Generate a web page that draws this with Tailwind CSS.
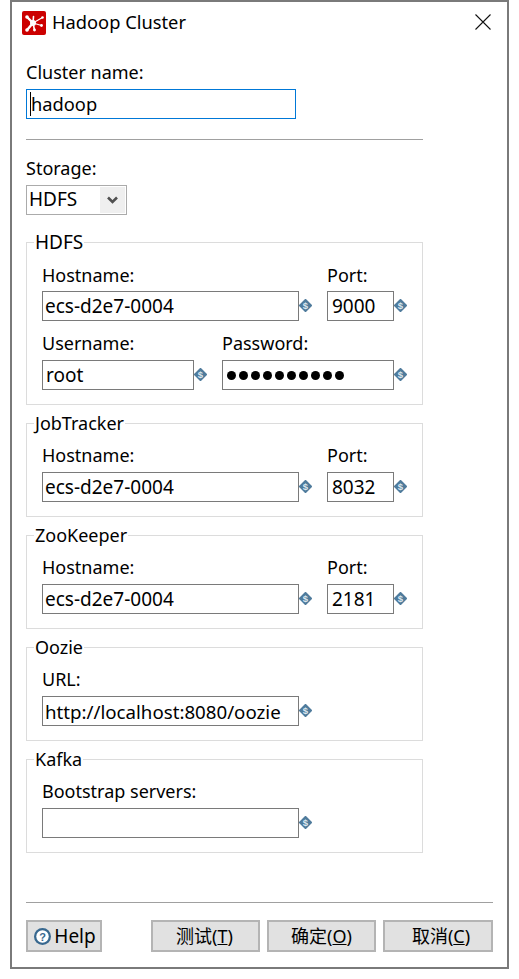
<!DOCTYPE html>
<html lang="en-us">
<head>
	<title>Hadoop Cluster</title>
	<meta name="viewport" content="width=device-width, initial-scale=1">
	<script src="https://cdn.jsdelivr.net/npm/@tailwindcss/browser@4"></script>
</head>
<body class="bg-white">

	<!-- shared variable marker -->
	<svg class="hidden">
		<symbol id="var" viewBox="0 0 13 13">
			<path d="M6.5 1 L12 6.5 L6.5 12 L1 6.5 Z" fill="#4f7b9c" stroke="#4f7b9c" stroke-width="2" stroke-linejoin="round"/>
			<text x="6.5" y="10" text-anchor="middle" font-size="9.5" font-weight="700" fill="#dfe8ef" font-family="Liberation Sans, sans-serif">$</text>
		</symbol>
	</svg>

	<div class="ml-[10px] w-[499px] h-[969px] border-2 border-[#7a7a7a] bg-white text-black text-[18px] leading-[24px] font-['Noto_Sans','Noto_Sans_CJK_SC',sans-serif]">

		<!-- title bar -->
		<div class="h-[42px] flex items-center pl-[10px] pr-[16px]">
			<svg class="w-[24px] h-[24px] shrink-0" viewBox="0 0 24 24">
				<rect width="24" height="24" rx="2" fill="#cc0000"/>
				<g stroke="#fff" stroke-linecap="round">
					<path d="M11 12 L5 6" stroke-width="2.4"/><path d="M11 12 L5 19" stroke-width="2.4"/>
					<path d="M11 12 L11.5 5.5" stroke-width="1.6"/><path d="M11 12 L12.5 19" stroke-width="1.6"/>
					<path d="M11 12 L20.5 6.5" stroke-width="1.2"/><path d="M11 12 L19.5 14.5" stroke-width="1.2"/>
				</g>
				<circle cx="11" cy="12" r="3" fill="#fff"/>
				<circle cx="5" cy="6" r="1.8" fill="#fff"/><circle cx="20.5" cy="6.5" r="1.3" fill="#fff"/>
				<circle cx="5" cy="19" r="1.8" fill="#fff"/><circle cx="19.5" cy="14.5" r="1.4" fill="#fff"/>
				<circle cx="12.5" cy="19" r="1.4" fill="#fff"/>
			</svg>
			<span class="ml-[6px] flex-1 text-[18.3px] -mt-[2px]">Hadoop Cluster</span>
			<svg class="w-[16px] h-[16px] -mt-[2px]" viewBox="0 0 16 16"><path d="M0.5 0.5 L15.5 15.5 M15.5 0.5 L0.5 15.5" stroke="#111" stroke-width="1.1" fill="none"/></svg>
		</div>

		<div class="pl-[14px] pr-[14px]">
			<p class="mt-[16px]">Cluster name:</p>
			<div class="relative mt-[5px] w-[270px]">
				<input value="hadoop" class="w-full h-[30px] border border-[#0078d7] pl-[4px] pb-[2px] text-[18.3px] outline-none">
				<span class="absolute left-[4px] top-[3px] w-px h-[24px] bg-black"></span>
			</div>
			<div class="mt-[20px] w-[397px] h-px bg-[#a0a0a0]"></div>

			<p class="mt-[16px]">Storage:</p>
			<div class="mt-[5px] w-[101px] h-[30px] border border-[#ababab] flex items-center justify-between pl-[2px] pr-px">
				<span class="text-[19px] -mt-[2px]">HDFS</span>
				<span class="w-[25px] h-[26px] bg-[#efefef] flex items-center justify-center">
					<svg class="w-[11px] h-[8px]" viewBox="0 0 11 8"><path d="M1 1.5 L5.5 6 L10 1.5" stroke="#505050" stroke-width="2.6" fill="none"/></svg>
				</span>
			</div>

			<!-- HDFS -->
			<div class="relative mt-[27px] w-[397px] h-[163px] border border-[#dcdcdc] pl-[15px] pt-[20px]">
				<span class="absolute left-[7px] top-[-13px] bg-white px-px text-[19px]">HDFS</span>
				<div class="flex">
					<div class="w-[285px]">
						<p class="mb-[4px]">Hostname:</p>
						<div class="flex items-center">
							<input value="ecs-d2e7-0004" class="w-[257px] h-[30px] border border-[#7a7a7a] pl-[2px] text-[19px] outline-none">
							<svg class="w-[13px] h-[13px] -mt-[2px]"><use href="#var"/></svg>
						</div>
					</div>
					<div>
						<p class="mb-[4px]">Port:</p>
						<div class="flex items-center">
							<input value="9000" class="w-[67px] h-[30px] border border-[#7a7a7a] pl-[4px] text-[19px] outline-none">
							<svg class="w-[13px] h-[13px] -mt-[2px]"><use href="#var"/></svg>
						</div>
					</div>
				</div>
				<div class="flex mt-[10px]">
					<div class="w-[180px]">
						<p class="mb-[5px]">Username:</p>
						<div class="flex items-center">
							<input value="root" class="w-[152px] h-[30px] border border-[#7a7a7a] pl-[3px] text-[19px] outline-none">
							<svg class="w-[13px] h-[13px] -mt-[2px]"><use href="#var"/></svg>
						</div>
					</div>
					<div>
						<p class="mb-[5px]">Password:</p>
						<div class="flex items-center">
							<div class="w-[172px] h-[30px] border border-[#7a7a7a] pl-[4px] flex items-center gap-[3px]">
								<i class="w-[9px] h-[9px] rounded-full bg-black"></i><i class="w-[9px] h-[9px] rounded-full bg-black"></i><i class="w-[9px] h-[9px] rounded-full bg-black"></i><i class="w-[9px] h-[9px] rounded-full bg-black"></i><i class="w-[9px] h-[9px] rounded-full bg-black"></i><i class="w-[9px] h-[9px] rounded-full bg-black"></i><i class="w-[9px] h-[9px] rounded-full bg-black"></i><i class="w-[9px] h-[9px] rounded-full bg-black"></i><i class="w-[9px] h-[9px] rounded-full bg-black"></i><i class="w-[9px] h-[9px] rounded-full bg-black"></i>
							</div>
							<svg class="w-[13px] h-[13px] -mt-[2px]"><use href="#var"/></svg>
						</div>
					</div>
				</div>
			</div>

			<!-- JobTracker -->
			<div class="relative mt-[18px] w-[397px] h-[94px] border border-[#dcdcdc] pl-[15px] pt-[19px] flex">
				<span class="absolute left-[7px] top-[-13px] bg-white px-px">JobTracker</span>
				<div class="w-[285px]">
					<p class="mb-[5px]">Hostname:</p>
					<div class="flex items-center">
						<input value="ecs-d2e7-0004" class="w-[257px] h-[30px] border border-[#7a7a7a] pl-[2px] text-[19px] outline-none">
						<svg class="w-[13px] h-[13px] -mt-[2px]"><use href="#var"/></svg>
					</div>
				</div>
				<div>
					<p class="mb-[5px]">Port:</p>
					<div class="flex items-center">
						<input value="8032" class="w-[67px] h-[30px] border border-[#7a7a7a] pl-[4px] text-[19px] outline-none">
						<svg class="w-[13px] h-[13px] -mt-[2px]"><use href="#var"/></svg>
					</div>
				</div>
			</div>

			<!-- ZooKeeper -->
			<div class="relative mt-[18px] w-[397px] h-[94px] border border-[#dcdcdc] pl-[15px] pt-[19px] flex">
				<span class="absolute left-[7px] top-[-13px] bg-white px-px">ZooKeeper</span>
				<div class="w-[285px]">
					<p class="mb-[5px]">Hostname:</p>
					<div class="flex items-center">
						<input value="ecs-d2e7-0004" class="w-[257px] h-[30px] border border-[#7a7a7a] pl-[2px] text-[19px] outline-none">
						<svg class="w-[13px] h-[13px] -mt-[2px]"><use href="#var"/></svg>
					</div>
				</div>
				<div>
					<p class="mb-[5px]">Port:</p>
					<div class="flex items-center">
						<input value="2181" class="w-[67px] h-[30px] border border-[#7a7a7a] pl-[4px] text-[19px] outline-none">
						<svg class="w-[13px] h-[13px] -mt-[2px]"><use href="#var"/></svg>
					</div>
				</div>
			</div>

			<!-- Oozie -->
			<div class="relative mt-[18px] w-[397px] h-[94px] border border-[#dcdcdc] pl-[15px] pt-[19px]">
				<span class="absolute left-[7px] top-[-13px] bg-white px-px">Oozie</span>
				<p class="mb-[5px]">URL:</p>
				<div class="flex items-center">
					<input value="http://localhost:8080/oozie" class="w-[257px] h-[30px] border border-[#7a7a7a] pl-[2px] text-[18.7px] outline-none">
					<svg class="w-[13px] h-[13px] -mt-[2px]"><use href="#var"/></svg>
				</div>
			</div>

			<!-- Kafka -->
			<div class="relative mt-[18px] w-[397px] h-[94px] border border-[#dcdcdc] pl-[15px] pt-[19px]">
				<span class="absolute left-[7px] top-[-13px] bg-white px-px">Kafka</span>
				<p class="mb-[5px]">Bootstrap servers:</p>
				<div class="flex items-center">
					<input class="w-[257px] h-[30px] border border-[#7a7a7a] pl-[2px] outline-none">
					<svg class="w-[13px] h-[13px] -mt-[2px]"><use href="#var"/></svg>
				</div>
			</div>

			<!-- footer -->
			<div class="mt-[49px] w-[467px] h-px bg-[#a0a0a0]"></div>
			<div class="mt-[17px] w-[467px] flex">
				<button class="w-[76px] h-[32px] bg-[#e1e1e1] border-2 border-[#b4b4b4] flex items-center justify-center gap-[3px] text-[19px] pl-[2px]">
					<svg class="w-[17px] h-[17px] shrink-0" viewBox="0 0 17 17">
						<circle cx="8.5" cy="8.5" r="8.5" fill="#38688f"/>
						<circle cx="8.5" cy="8.5" r="6.2" fill="#fff"/>
						<text x="8.5" y="12.5" text-anchor="middle" font-size="11" font-weight="700" fill="#38688f" font-family="Liberation Sans, sans-serif">?</text>
					</svg>
					Help
				</button>
				<button class="ml-[49px] w-[109px] h-[32px] bg-[#e1e1e1] border-2 border-[#b4b4b4] pr-[2px]">测试(<span class="underline">T</span>)</button>
				<button class="ml-[7px] w-[109px] h-[32px] bg-[#e1e1e1] border-2 border-[#b4b4b4]">确定(<span class="underline">O</span>)</button>
				<button class="ml-[7px] w-[110px] h-[32px] bg-[#e1e1e1] border-2 border-[#b4b4b4] pl-[6px]">取消(<span class="underline">C</span>)</button>
			</div>
		</div>
	</div>
</body>
</html>
